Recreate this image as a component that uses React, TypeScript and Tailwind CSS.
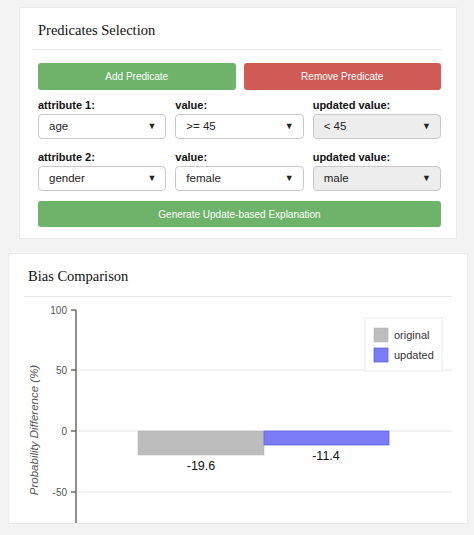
import React from "react"

const sans = "font-['Liberation_Sans',Arial,sans-serif]"
const serif = "font-['Liberation_Serif','Times_New_Roman',serif]"

function Select({ value, muted }: { value: string; muted?: boolean }) {
  return (
    <div
      className={`flex h-[25px] items-center justify-between rounded-[4px] border border-[#c9c9c9] pl-[10px] pr-[9px] text-[11.5px] text-[#222] ${
        muted ? "bg-[#ededed]" : "bg-white"
      }`}
    >
      <span>{value}</span>
      <span className="text-[9px] text-[#222]">▼</span>
    </div>
  )
}

function Field({ label, value, muted }: { label: string; value: string; muted?: boolean }) {
  return (
    <div className="flex flex-col gap-[2px]">
      <label className="text-[11px] leading-[13px] font-bold text-[#111]">{label}</label>
      <Select value={value} muted={muted} />
    </div>
  )
}

function BiasChart() {
  const ticks = [
    { v: "100", y: 13 },
    { v: "50", y: 73 },
    { v: "0", y: 134 },
    { v: "-50", y: 195 },
  ]
  return (
    <svg width="444" height="228" className="block" fontFamily="Liberation Sans, Arial, sans-serif">
      {ticks.slice(1).map((t) => (
        <line key={t.v} x1="53" x2="428" y1={t.y} y2={t.y} stroke="#e6e6e6" strokeWidth="1" />
      ))}
      <line x1="52" x2="52" y1="13" y2="228" stroke="#555" strokeWidth="1.3" />
      {ticks.map((t) => (
        <g key={t.v}>
          <line x1="47" x2="52" y1={t.y} y2={t.y} stroke="#555" strokeWidth="1.3" />
          <text x="43" y={t.y + 3.5} textAnchor="end" fontSize="10" fill="#555">
            {t.v}
          </text>
        </g>
      ))}
      <text
        x="0"
        y="0"
        transform="translate(14 133) rotate(-90)"
        textAnchor="middle"
        fontSize="11.5"
        fontStyle="italic"
        fill="#555"
      >
        Probability Difference (%)
      </text>
      <rect x="114" y="134" width="126" height="24" fill="#bdbdbd" stroke="#b0b0b0" strokeWidth="0.5" />
      <rect x="240" y="134" width="125" height="14" fill="#7b7bf6" stroke="#6565e0" strokeWidth="0.8" />
      <text x="177" y="173" textAnchor="middle" fontSize="12.5" fill="#111">
        -19.6
      </text>
      <text x="302" y="163" textAnchor="middle" fontSize="12.5" fill="#111">
        -11.4
      </text>
      <rect x="341" y="21" width="77" height="53" fill="white" stroke="#ececec" strokeWidth="1" />
      <rect x="350" y="31" width="14" height="14" fill="#bdbdbd" stroke="#b0b0b0" strokeWidth="0.5" />
      <text x="370" y="42" fontSize="11" fill="#333">
        original
      </text>
      <rect x="350" y="51" width="14" height="14" fill="#7b7bf6" stroke="#6565e0" strokeWidth="0.8" />
      <text x="370" y="62" fontSize="11" fill="#333">
        updated
      </text>
    </svg>
  )
}

export default function App() {
  return (
    <div className={`h-[535px] w-[474px] overflow-hidden bg-[#f3f3f3] ${sans}`}>
      {/* Predicates Selection */}
      <section className="ml-[19px] mr-[17px] mt-[7px] h-[232px] border border-[#eaeaea] bg-white pl-[13px] pr-[14px]">
        <h2 className={`${serif} pl-[5px] pt-[12px] pb-[9px] text-[14.5px] leading-[20px] text-[#111]`}>
          Predicates Selection
        </h2>
        <div className="h-px bg-[#e8e8e8]" />
        <div className="pl-[5px] pr-[1px] pt-[13px]">
          <div className="grid grid-cols-2 gap-[8px]">
            <button className="h-[27px] rounded-[3px] bg-[#6db46a] text-[10px] text-white">Add Predicate</button>
            <button className="h-[27px] rounded-[3px] bg-[#cf5b55] text-[10px] text-white">Remove Predicate</button>
          </div>
          <div className="mt-[9px] grid grid-cols-3 gap-x-[9px] gap-y-[12px]">
            <Field label="attribute 1:" value="age" />
            <Field label="value:" value=">= 45" />
            <Field label="updated value:" value="< 45" muted />
            <Field label="attribute 2:" value="gender" />
            <Field label="value:" value="female" />
            <Field label="updated value:" value="male" muted />
          </div>
          <button className="mt-[10px] h-[26px] w-full rounded-[3px] bg-[#6db46a] text-[10px] text-white">
            Generate Update-based Explanation
          </button>
        </div>
      </section>

      {/* Bias Comparison */}
      <section className="ml-[8px] mr-[6px] mt-[14px] h-[271px] overflow-hidden border border-[#eaeaea] bg-white px-[15px]">
        <h2 className={`${serif} pl-[4px] pt-[12px] pb-[10px] text-[14.5px] leading-[20px] text-[#111]`}>
          Bias Comparison
        </h2>
        <div className="h-px bg-[#e8e8e8]" />
        <BiasChart />
      </section>
    </div>
  )
}
